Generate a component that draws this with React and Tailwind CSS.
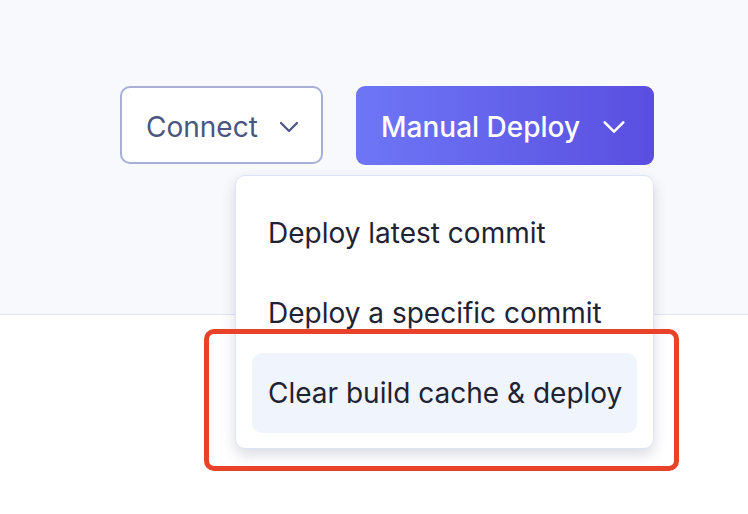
import React from 'react';

const Chevron = ({ className }) => (
  <svg viewBox="0 0 20 12" fill="none" className={className}>
    <path d="M2 2l8 8 8-8" stroke="currentColor" strokeWidth="2.2" strokeLinecap="round" strokeLinejoin="round" />
  </svg>
);

const items = ['Deploy latest commit', 'Deploy a specific commit', 'Clear build cache & deploy'];

const App = () => {
  return (
    <div className="relative w-[748px] h-[514px] bg-white overflow-hidden" style={{ fontFamily: 'Inter, "Noto Sans", sans-serif' }}>
      {/* Header strip */}
      <div className="h-[315px] bg-[#f8f9fc] border-b border-[#dfe5f4]">
        <div className="flex justify-end gap-[33px] pt-[86px] pr-[94px]">
          <button className="flex items-center gap-[21px] h-[78px] w-[203px] pl-[24px] pt-[3px] rounded-[10px] border-2 border-[#a7afd6] bg-white text-[#4a5580] text-[28px] leading-none whitespace-nowrap">
            Connect
            <Chevron className="w-[20px] h-[12px]" />
          </button>
          <div className="relative">
            <button className="flex items-center gap-[22px] h-[79px] w-[298px] pl-[25px] pt-[3px] rounded-[9px] bg-gradient-to-r from-[#6e76f6] to-[#5a4ee0] text-white font-medium text-[28px] leading-none whitespace-nowrap">
              Manual Deploy
              <Chevron className="w-[24px] h-[14px]" />
            </button>

            {/* Dropdown */}
            <div className="absolute right-0 top-[89px] w-[419px] bg-white rounded-[10px] border border-[#dde4f5] shadow-[0_6px_14px_rgba(30,40,80,0.16)] pt-[17px] pb-[15px] px-[16px] z-10">
              {items.map((item, i) => (
                <div
                  key={item}
                  className={`h-[80px] flex items-center px-[16px] rounded-[10px] text-[28px] text-[#1f2333] whitespace-nowrap ${i === 2 ? 'bg-[#f0f4fd]' : ''}`}
                >
                  {item}
                </div>
              ))}
            </div>
          </div>
        </div>
      </div>

      {/* Annotation */}
      <div className="absolute left-[204px] top-[329px] w-[475px] h-[142px] border-[5px] border-[#e8432a] rounded-[10px] z-20" />
    </div>
  );
};

export default App;
